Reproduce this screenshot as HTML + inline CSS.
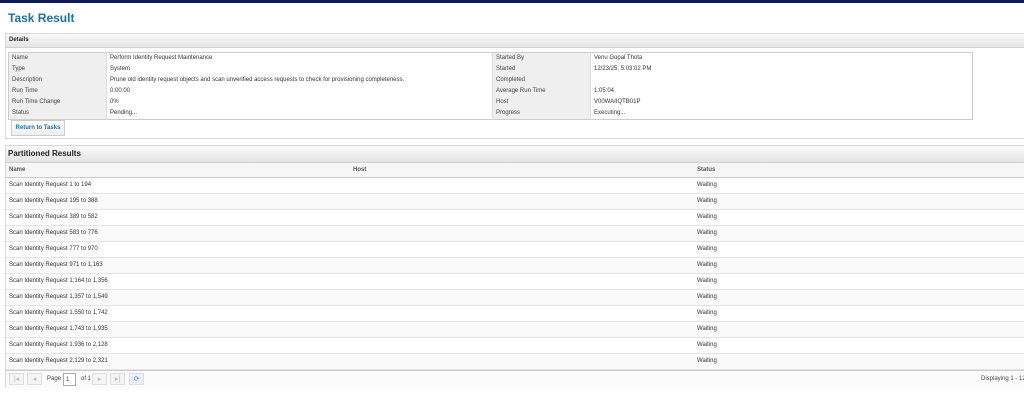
<!DOCTYPE html>
<html><head><style>
body{margin:0;width:1024px;height:414px;overflow:hidden;background:#fff;font-family:"Liberation Sans",sans-serif;position:relative}
.top{position:absolute;left:0;top:0;width:1024px;height:3px;background:#0d1a5a}
h1{position:absolute;left:8px;top:11px;margin:0;font-size:12px;color:#1d6fa5;font-weight:bold}
.panel{position:absolute;left:5px;width:1030px;border:1px solid #d8d8d8;box-sizing:border-box}
.ph{background:linear-gradient(#fafafa,#e4e4e4);border-bottom:1px solid #d0d0d0;font-weight:bold;color:#222}
table{border-collapse:collapse}
.det{position:absolute;left:2px;top:18px;width:965px;border:1px solid #ccc;font-size:6px;color:#333}
.det td{height:11px;padding:0 3px;line-height:11px}
.det td.l{background:#efefef;border-right:1px solid #ddd;color:#444}
.btn{position:absolute;left:5px;top:86px;width:52px;height:14px;border:1px solid #ccc;background:linear-gradient(#fff,#eee);font-size:6px;font-weight:bold;color:#1d6fa5;text-align:center;line-height:14px}
.ch{height:14px;background:#f6f6f6;border-bottom:1px solid #ccc;font-size:6px;font-weight:bold;color:#555;position:relative}
.ch span,.r span{position:absolute;top:0}
.r{height:16px;border-bottom:1px solid #e4e4e4;font-size:6px;color:#333;position:relative;line-height:15px;box-sizing:border-box}
.r:nth-child(even){background:#fafafa}
.tb{height:17px;background:#fbfbfb;border-top:1px solid #ccc;position:relative;font-size:6px;color:#444}
.pb{position:absolute;top:2px;width:15px;height:12px;border:1px solid #ddd;background:#f4f4f4;box-sizing:border-box;color:#bbb;text-align:center;line-height:11px;font-size:7px}
</style></head><body>
<div class="top"></div>
<h1>Task Result</h1>
<div class="panel" style="top:33px;height:106px">
<div class="ph" style="height:13px;font-size:6px;line-height:13px;padding-left:3px">Details</div>
<table class="det">
<tr><td class="l" style="width:91px">Name</td><td style="width:379px">Perform Identity Request Maintenance</td><td class="l" style="width:91px;border-left:1px solid #ddd">Started By</td><td>Venu Gopal Thota</td></tr>
<tr><td class="l">Type</td><td>System</td><td class="l" style="border-left:1px solid #ddd">Started</td><td>12/23/25, 5:03:02 PM</td></tr>
<tr><td class="l">Description</td><td>Prune old identity request objects and scan unverified access requests to check for provisioning completeness.</td><td class="l" style="border-left:1px solid #ddd">Completed</td><td></td></tr>
<tr><td class="l">Run Time</td><td>0:00:00</td><td class="l" style="border-left:1px solid #ddd">Average Run Time</td><td>1:05:04</td></tr>
<tr><td class="l">Run Time Change</td><td>0%</td><td class="l" style="border-left:1px solid #ddd">Host</td><td>V00WAIIQTB01P</td></tr>
<tr><td class="l">Status</td><td>Pending...</td><td class="l" style="border-left:1px solid #ddd">Progress</td><td>Executing...</td></tr>
</table>
<div class="btn">Return to Tasks</div>
</div>
<div class="panel" style="top:145px;height:243px">
<div class="ph" style="height:16px;font-size:8px;line-height:16px;padding-left:2px">Partitioned Results</div>
<div class="ch"><span style="left:3px;line-height:14px">Name</span><span style="left:347px;line-height:14px">Host</span><span style="left:691px;line-height:14px">Status</span></div>
<div>
<div class="r"><span style="left:3px">Scan Identity Request 1 to 194</span><span style="left:691px">Waiting</span></div>
<div class="r"><span style="left:3px">Scan Identity Request 195 to 388</span><span style="left:691px">Waiting</span></div>
<div class="r"><span style="left:3px">Scan Identity Request 389 to 582</span><span style="left:691px">Waiting</span></div>
<div class="r"><span style="left:3px">Scan Identity Request 583 to 776</span><span style="left:691px">Waiting</span></div>
<div class="r"><span style="left:3px">Scan Identity Request 777 to 970</span><span style="left:691px">Waiting</span></div>
<div class="r"><span style="left:3px">Scan Identity Request 971 to 1,163</span><span style="left:691px">Waiting</span></div>
<div class="r"><span style="left:3px">Scan Identity Request 1,164 to 1,356</span><span style="left:691px">Waiting</span></div>
<div class="r"><span style="left:3px">Scan Identity Request 1,357 to 1,549</span><span style="left:691px">Waiting</span></div>
<div class="r"><span style="left:3px">Scan Identity Request 1,550 to 1,742</span><span style="left:691px">Waiting</span></div>
<div class="r"><span style="left:3px">Scan Identity Request 1,743 to 1,935</span><span style="left:691px">Waiting</span></div>
<div class="r"><span style="left:3px">Scan Identity Request 1,936 to 2,128</span><span style="left:691px">Waiting</span></div>
<div class="r"><span style="left:3px">Scan Identity Request 2,129 to 2,321</span><span style="left:691px">Waiting</span></div>
</div>
<div class="tb">
<div class="pb" style="left:3px">|&#9666;</div><div class="pb" style="left:21px">&#9666;</div>
<span style="position:absolute;left:41px;top:5px">Page</span>
<div style="position:absolute;left:57px;top:2px;width:13px;height:13px;border:1px solid #aaa;background:#fff;box-sizing:border-box;padding-left:2px;line-height:12px">1</div>
<span style="position:absolute;left:75px;top:5px">of 1</span>
<div class="pb" style="left:86px">&#9656;</div><div class="pb" style="left:104px">&#9656;|</div>
<div class="pb" style="left:123px;color:#3a8fd0;background:#eef">&#10227;</div>
<span style="position:absolute;left:975px;top:5px;white-space:nowrap">Displaying 1 - 12 of 12</span>
</div>
</div>
</body></html>
